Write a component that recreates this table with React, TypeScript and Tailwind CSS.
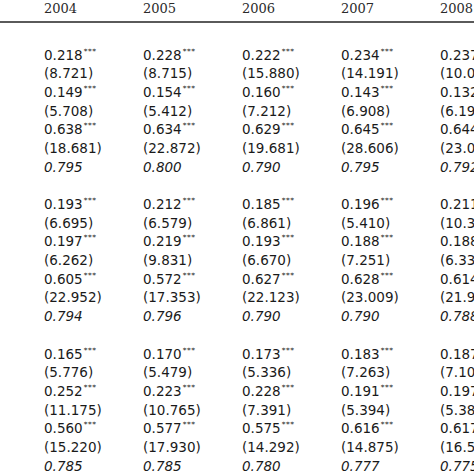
interface YearColumn {
  year: string;
  groups: string[][];
}

// each group: coef, (t), coef, (t), coef, (t), adj. R2
const columns: YearColumn[] = [
  {
    year: '2004',
    groups: [
      ['0.218', '(8.721)', '0.149', '(5.708)', '0.638', '(18.681)', '0.795'],
      ['0.193', '(6.695)', '0.197', '(6.262)', '0.605', '(22.952)', '0.794'],
      ['0.165', '(5.776)', '0.252', '(11.175)', '0.560', '(15.220)', '0.785'],
    ],
  },
  {
    year: '2005',
    groups: [
      ['0.228', '(8.715)', '0.154', '(5.412)', '0.634', '(22.872)', '0.800'],
      ['0.212', '(6.579)', '0.219', '(9.831)', '0.572', '(17.353)', '0.796'],
      ['0.170', '(5.479)', '0.223', '(10.765)', '0.577', '(17.930)', '0.785'],
    ],
  },
  {
    year: '2006',
    groups: [
      ['0.222', '(15.880)', '0.160', '(7.212)', '0.629', '(19.681)', '0.790'],
      ['0.185', '(6.861)', '0.193', '(6.670)', '0.627', '(22.123)', '0.790'],
      ['0.173', '(5.336)', '0.228', '(7.391)', '0.575', '(14.292)', '0.780'],
    ],
  },
  {
    year: '2007',
    groups: [
      ['0.234', '(14.191)', '0.143', '(6.908)', '0.645', '(28.606)', '0.795'],
      ['0.196', '(5.410)', '0.188', '(7.251)', '0.628', '(23.009)', '0.790'],
      ['0.183', '(7.263)', '0.191', '(5.394)', '0.616', '(14.875)', '0.777'],
    ],
  },
  {
    year: '2008',
    groups: [
      ['0.237', '(10.042)', '0.132', '(6.195)', '0.644', '(23.017)', '0.792'],
      ['0.211', '(10.318)', '0.188', '(6.334)', '0.614', '(21.906)', '0.788'],
      ['0.187', '(7.102)', '0.197', '(5.381)', '0.617', '(16.524)', '0.775'],
    ],
  },
];

function Cell({ value, index }: { value: string; index: number }) {
  const isT = index % 2 === 1 && index < 6;
  const isR2 = index === 6;

  if (isR2) {
    return <div className="h-[18.7px] leading-[18.7px] italic">{value}</div>;
  }

  return (
    <div className="h-[18.7px] leading-[18.7px] whitespace-nowrap">
      {value}
      {!isT && (
        <span className="relative top-[-6px] ml-[1px] text-[7.5px] leading-none tracking-[0.5px]">***</span>
      )}
    </div>
  );
}

export default function App() {
  return (
    <div className="w-[474px] h-[474px] overflow-hidden bg-white text-[#1a1a1a]">
      {/* header years */}
      <div className="flex h-[18px] items-center pl-[44px] text-[13px] text-[#2a2a2a] font-['DejaVu_Serif',serif]">
        {columns.map((c) => (
          <div key={c.year} className="w-[99px] shrink-0">
            {c.year}
          </div>
        ))}
      </div>
      <div className="mt-[3px] h-[2px] w-full bg-[#5a5a5a]" />

      {/* body */}
      <div className="flex pl-[44px] pt-[22.5px] text-[13.5px] font-['DejaVu_Sans',sans-serif]">
        {columns.map((c) => (
          <div key={c.year} className="w-[99px] shrink-0">
            {c.groups.map((g, gi) => (
              <div key={gi} className={gi > 0 ? 'mt-[18.7px]' : ''}>
                {g.map((v, i) => (
                  <Cell key={i} value={v} index={i} />
                ))}
              </div>
            ))}
          </div>
        ))}
      </div>
    </div>
  );
}
